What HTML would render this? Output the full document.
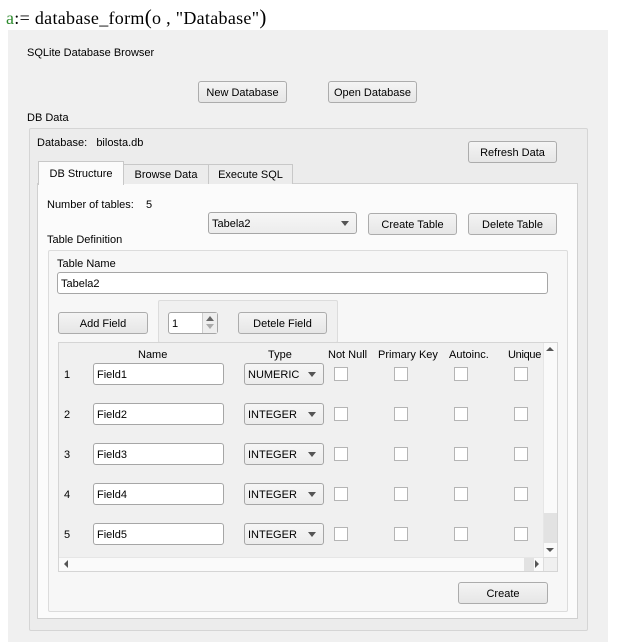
<!DOCTYPE html>
<html><head><meta charset="utf-8"><style>
*{box-sizing:border-box;margin:0;padding:0}
body{width:619px;height:642px;background:#fff;position:relative;overflow:hidden;font-family:"Liberation Sans",Tahoma,sans-serif;font-size:11px;color:#000}
.a{position:absolute}
.t{position:absolute;white-space:nowrap;line-height:15px}
.btn{position:absolute;height:22px;border:1px solid #acacac;border-radius:3px;background:linear-gradient(#f4f4f4,#e6e6e6);text-align:center;line-height:22px;white-space:nowrap}
.inp{position:absolute;height:22px;border:1px solid #a6a6a6;border-radius:3px;background:#fff;line-height:22px;padding-left:3px;white-space:nowrap}
.cb{position:absolute;height:22px;border:1px solid #a6a6a6;border-radius:3px;background:linear-gradient(#f6f6f6,#ececec);line-height:22px;padding-left:3px;white-space:nowrap}
.cb:after{content:"";position:absolute;right:7px;top:8px;border-left:4px solid transparent;border-right:4px solid transparent;border-top:5px solid #555}
.chk{position:absolute;width:14px;height:14px;border:1px solid #b5b5b5;background:#fff}
</style></head><body>
<div class="t" style="left:6px;top:5px;font-family:'Liberation Serif',serif;font-size:18px;line-height:24px;letter-spacing:0.3px"><span style="color:#2e8b2e">a</span>:= database_form<span style="font-size:21px">(</span>o , "Database"<span style="font-size:21px">)</span></div>
<div class="a" style="left:8px;top:30px;width:600px;height:612px;background:#f0f0f0"></div>
<div class="t" style="left:27px;top:46px">SQLite Database Browser</div>
<div class="btn" style="left:198px;top:81px;width:89px">New Database</div>
<div class="btn" style="left:328px;top:81px;width:89px">Open Database</div>
<div class="t" style="left:27px;top:111px">DB Data</div>
<div class="a" style="left:29px;top:128px;width:559px;height:503px;border:1px solid #d5d5d5;border-radius:2px;background:#ececec"></div>
<div class="t" style="left:37px;top:136px">Database:&nbsp;&nbsp; bilosta.db</div>
<div class="btn" style="left:468px;top:141px;width:89px">Refresh Data</div>
<div class="a" style="left:37px;top:183px;width:541px;height:436px;border:1px solid #d0d0d0;background:#fbfbfb"></div>
<div class="a" style="left:123px;top:164px;width:86px;height:20px;border:1px solid #c8c8c8;border-bottom:none;background:#ececec;text-align:center;line-height:21px">Browse Data</div>
<div class="a" style="left:208px;top:164px;width:85px;height:20px;border:1px solid #c8c8c8;border-bottom:none;background:#ececec;text-align:center;line-height:21px">Execute SQL</div>
<div class="a" style="left:38px;top:161px;width:86px;height:24px;border:1px solid #c8c8c8;border-bottom:none;background:#fbfbfb;text-align:center;line-height:24px">DB Structure</div>
<div class="t" style="left:47px;top:198px">Number of tables:&nbsp;&nbsp;&nbsp; 5</div>
<div class="cb" style="left:208px;top:212px;width:149px">Tabela2</div>
<div class="btn" style="left:368px;top:213px;width:89px">Create Table</div>
<div class="btn" style="left:468px;top:213px;width:89px">Delete Table</div>
<div class="t" style="left:47px;top:233px">Table Definition</div>
<div class="a" style="left:48px;top:250px;width:520px;height:362px;border:1px solid #dcdcdc;border-radius:2px;background:#f7f7f7"></div>
<div class="t" style="left:57px;top:257px">Table Name</div>
<div class="inp" style="left:57px;top:272px;width:491px">Tabela2</div>
<div class="btn" style="left:58px;top:312px;width:90px">Add Field</div>
<div class="a" style="left:158px;top:300px;width:180px;height:43px;border:1px solid #dcdcdc;border-radius:2px;background:#f0f0f0"></div>
<div class="inp" style="left:168px;top:312px;width:50px">1</div>
<div class="a" style="left:202px;top:313px;width:15px;height:20px;border-left:1px solid #ccc;background:#eee"></div>
<div class="a" style="left:206px;top:316px;border-left:4px solid transparent;border-right:4px solid transparent;border-bottom:5px solid #666"></div>
<div class="a" style="left:206px;top:324px;border-left:4px solid transparent;border-right:4px solid transparent;border-top:5px solid #aaa"></div>
<div class="btn" style="left:238px;top:312px;width:89px">Detele Field</div>
<div class="a" style="left:58px;top:342px;width:500px;height:230px;border:1px solid #d5d5d5;background:#f0f0f0"></div>
<div class="t" style="left:138px;top:348px">Name</div>
<div class="t" style="left:268px;top:348px">Type</div>
<div class="t" style="left:328px;top:348px">Not Null</div>
<div class="t" style="left:378px;top:348px">Primary Key</div>
<div class="t" style="left:449px;top:348px">Autoinc.</div>
<div class="t" style="left:508px;top:348px;letter-spacing:-0.3px">Unique</div>
<div class="t" style="left:64px;top:368px">1</div><div class="inp" style="left:93px;top:363px;width:131px">Field1</div><div class="cb" style="left:244px;top:363px;width:80px">NUMERIC</div>
<div class="t" style="left:64px;top:408px">2</div><div class="inp" style="left:93px;top:403px;width:131px">Field2</div><div class="cb" style="left:244px;top:403px;width:80px">INTEGER</div>
<div class="t" style="left:64px;top:448px">3</div><div class="inp" style="left:93px;top:443px;width:131px">Field3</div><div class="cb" style="left:244px;top:443px;width:80px">INTEGER</div>
<div class="t" style="left:64px;top:488px">4</div><div class="inp" style="left:93px;top:483px;width:131px">Field4</div><div class="cb" style="left:244px;top:483px;width:80px">INTEGER</div>
<div class="t" style="left:64px;top:528px">5</div><div class="inp" style="left:93px;top:523px;width:131px">Field5</div><div class="cb" style="left:244px;top:523px;width:80px">INTEGER</div>
<div class="chk" style="left:334px;top:367px"></div><div class="chk" style="left:394px;top:367px"></div><div class="chk" style="left:454px;top:367px"></div><div class="chk" style="left:514px;top:367px"></div>
<div class="chk" style="left:334px;top:407px"></div><div class="chk" style="left:394px;top:407px"></div><div class="chk" style="left:454px;top:407px"></div><div class="chk" style="left:514px;top:407px"></div>
<div class="chk" style="left:334px;top:447px"></div><div class="chk" style="left:394px;top:447px"></div><div class="chk" style="left:454px;top:447px"></div><div class="chk" style="left:514px;top:447px"></div>
<div class="chk" style="left:334px;top:487px"></div><div class="chk" style="left:394px;top:487px"></div><div class="chk" style="left:454px;top:487px"></div><div class="chk" style="left:514px;top:487px"></div>
<div class="chk" style="left:334px;top:527px"></div><div class="chk" style="left:394px;top:527px"></div><div class="chk" style="left:454px;top:527px"></div><div class="chk" style="left:514px;top:527px"></div>
<div class="a" style="left:543px;top:343px;width:14px;height:214px;background:#fafafa;border-left:1px solid #e6e6e6"></div>
<div class="a" style="left:544px;top:513px;width:13px;height:30px;background:#e2e2e2"></div>
<div class="a" style="left:546px;top:347px;border-left:4px solid transparent;border-right:4px solid transparent;border-bottom:4px solid #555"></div>
<div class="a" style="left:546px;top:548px;border-left:4px solid transparent;border-right:4px solid transparent;border-top:4px solid #555"></div>
<div class="a" style="left:59px;top:557px;width:484px;height:14px;background:#fafafa;border-top:1px solid #e6e6e6"></div>
<div class="a" style="left:524px;top:558px;width:10px;height:13px;background:#e2e2e2"></div>
<div class="a" style="left:64px;top:560px;border-top:4px solid transparent;border-bottom:4px solid transparent;border-right:4px solid #555"></div>
<div class="a" style="left:535px;top:560px;border-top:4px solid transparent;border-bottom:4px solid transparent;border-left:4px solid #555"></div>
<div class="a" style="left:543px;top:557px;width:14px;height:14px;background:#f0f0f0;border-left:1px solid #ddd;border-top:1px solid #ddd"></div>
<div class="btn" style="left:458px;top:582px;width:90px">Create</div>
</body></html>
